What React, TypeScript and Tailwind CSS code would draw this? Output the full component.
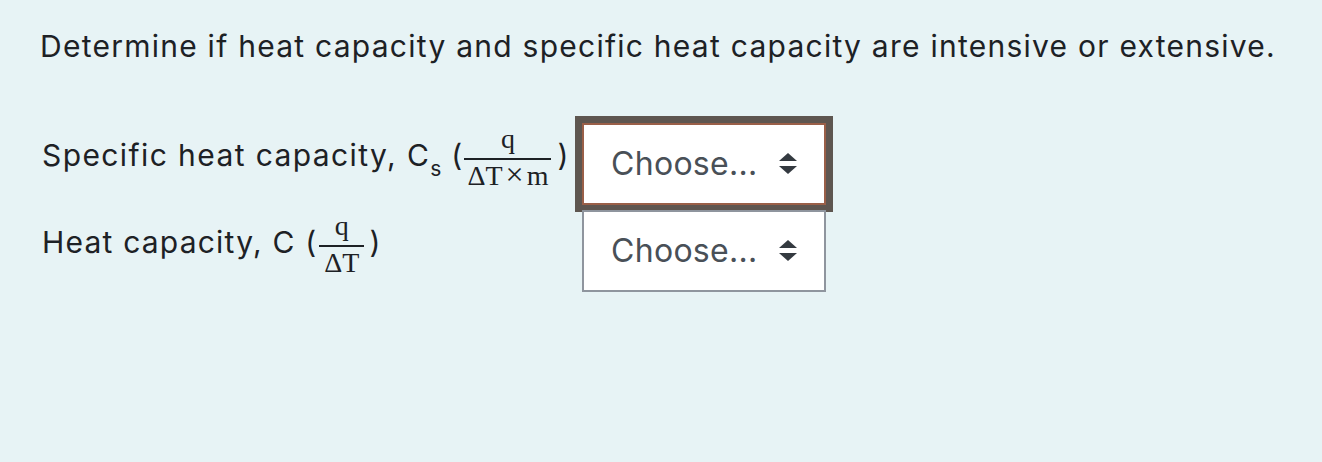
import React from 'react';

function Arrows() {
  return (
    <svg width="18" height="22" viewBox="0 0 18 22" className="shrink-0">
      <path d="M9 0 L18 8 L0 8 Z" fill="#343a40" />
      <path d="M0 13 L18 13 L9 21 Z" fill="#343a40" />
    </svg>
  );
}

function Frac({
  top,
  bottom,
  className,
  pad,
}: {
  top: React.ReactNode;
  bottom: React.ReactNode;
  className?: string;
  pad?: string;
}) {
  return (
    <span
      className={
        "inline-flex flex-col items-stretch text-center align-middle font-['Liberation_Serif',serif] text-[28px] leading-[26px] tracking-normal " +
        (className || '')
      }
    >
      <span className="pb-[6px]">{top}</span>
      <span className={'border-t-2 border-[#1d2125] pt-[3px] ' + (pad || 'px-[3px]')}>{bottom}</span>
    </span>
  );
}

function Select({ focused }: { focused?: boolean }) {
  return (
    <div
      className={
        'w-[244px] h-[82px] shrink-0 bg-white flex items-center justify-between pl-[27px] pr-[27px] text-[32px] tracking-[0.3px] text-[#495057] ' +
        (focused
          ? 'border-2 border-[#9a5f48] shadow-[0_0_0_7px_#5e5650]'
          : 'border-2 border-[#8f959e]')
      }
    >
      <span>Choose...</span>
      <Arrows />
    </div>
  );
}

export default function App() {
  return (
    <div className="w-[1322px] h-[462px] bg-[#e7f3f5] text-[#1d2125] font-['Inter',sans-serif] pl-[40px] pt-[26px]">
      <p className="text-[30px] leading-[40px] tracking-[1.25px]">
        Determine if heat capacity and specific heat capacity are intensive or extensive.
      </p>

      <div className="mt-[57px] flex flex-col gap-[5px]">
        <div className="flex items-start">
          <div className="w-[542px] h-[82px] pl-[2px] pt-[3px] text-[30px] leading-[58px] tracking-[1.4px] whitespace-nowrap">
            Specific heat capacity, C
            <span className="text-[21px] tracking-normal align-[-10px]">s</span>
            {' ('}
            <Frac
              className="ml-[1px] mr-[6px]"
              top="q"
              bottom={<>ΔT<span className="mx-[3px] text-[32px] leading-[20px]">×</span>m</>}
            />
            )
          </div>
          <Select focused />
        </div>
        <div className="flex items-start">
          <div className="w-[542px] h-[82px] pl-[2px] pt-[3px] text-[30px] leading-[58px] tracking-[1.2px] whitespace-nowrap">
            {'Heat capacity, C ('}
            <Frac className="ml-[2px] mr-[5px]" pad="px-[5px]" top="q" bottom="ΔT" />
            )
          </div>
          <Select />
        </div>
      </div>
    </div>
  );
}
